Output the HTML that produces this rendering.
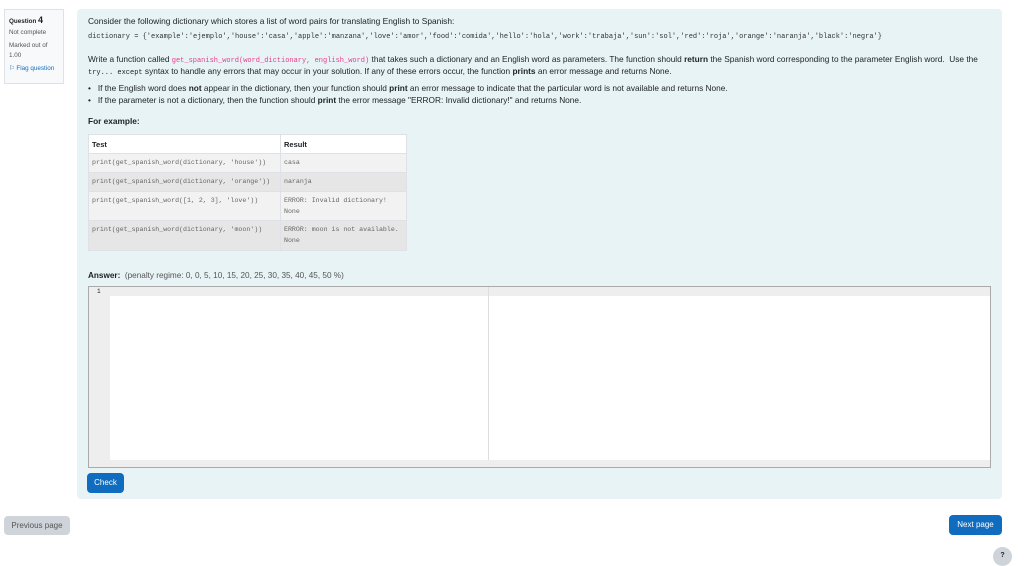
<!DOCTYPE html>
<html><head><meta charset="utf-8"><style>
*{box-sizing:border-box;margin:0;padding:0}
body{width:1024px;height:561px;background:#fff;font-family:"Liberation Sans",sans-serif;color:#1d2125;position:relative;overflow:hidden;font-size:7px}
.info{position:absolute;left:4px;top:9px;width:60px;height:75px;background:#f8f9fa;border:1px solid #dee2e6;padding:5px 4px;font-size:6.3px;color:#555}
.info b{color:#1d2125;font-size:6.3px}
.panel{position:absolute;left:77px;top:9px;width:925px;height:490px;background:#e7f3f5;border-radius:4px}
.t{position:absolute;white-space:nowrap}
.mono{font-family:"Liberation Mono",monospace;font-size:7px}
table{position:absolute;left:88px;top:134px;border-collapse:collapse;font-size:7.5px;table-layout:fixed;width:318px}
td,th{border:1px solid #dee2e6;padding:0 3px;text-align:left;vertical-align:top;overflow:hidden}
th{background:#fff;height:19px;vertical-align:middle;font-size:7.5px}
td{font-family:"Liberation Mono",monospace;color:#666;font-size:6.6px;line-height:11px;padding-top:3px;white-space:nowrap}
.btn{position:absolute;border-radius:4px;color:#fff;background:#0f6cbf;font-size:8px;text-align:center}
</style></head><body>
<div class="info"><b>Question <span style="font-size:9px">4</span></b><div style="margin-top:4px">Not complete</div><div style="margin-top:5px;line-height:10px">Marked out of<br>1.00</div><div style="margin-top:4px;color:#0f6cbf">⚐ Flag question</div></div>
<div class="panel"></div>
<div class="t" style="left:88px;top:16px;font-size:8.4px">Consider the following dictionary which stores a list of word pairs for translating English to Spanish:</div>
<div class="t mono" style="left:88px;top:33px;color:#333;font-size:7px">dictionary = {'example':'ejemplo','house':'casa','apple':'manzana','love':'amor','food':'comida','hello':'hola','work':'trabaja','sun':'sol','red':'roja','orange':'naranja','black':'negra'}</div>
<div class="t" style="left:88px;top:54px;font-size:8.3px">Write a function called <span class="mono" style="color:#e83e8c">get_spanish_word(word_dictionary, english_word)</span> that takes such a dictionary and an English word as parameters. The function should <b>return</b> the Spanish word corresponding to the parameter English word.&nbsp; Use the</div>
<div class="t" style="left:88px;top:66px;font-size:8.3px"><span class="mono">try... except</span> syntax to handle any errors that may occur in your solution. If any of these errors occur, the function <b>prints</b> an error message and returns None.</div>
<div class="t" style="left:88px;top:83px;font-size:8.3px">•&nbsp;&nbsp; If the English word does <b>not</b> appear in the dictionary, then your function should <b>print</b> an error message to indicate that the particular word is not available and returns None.</div>
<div class="t" style="left:88px;top:95px;font-size:8.3px">•&nbsp;&nbsp; If the parameter is not a dictionary, then the function should <b>print</b> the error message "ERROR: Invalid dictionary!" and returns None.</div>
<div class="t" style="left:88px;top:116px;font-size:8.3px;font-weight:bold">For example:</div>
<table>
<colgroup><col style="width:192px"><col style="width:126px"></colgroup>
<tr><th>Test</th><th>Result</th></tr>
<tr style="background:#f2f2f2"><td style="height:19px">print(get_spanish_word(dictionary, 'house'))</td><td>casa</td></tr>
<tr style="background:#e6e6e6"><td style="height:19px">print(get_spanish_word(dictionary, 'orange'))</td><td>naranja</td></tr>
<tr style="background:#f2f2f2"><td style="height:29px">print(get_spanish_word([1, 2, 3], 'love'))</td><td>ERROR: Invalid dictionary!<br>None</td></tr>
<tr style="background:#e6e6e6"><td style="height:30px">print(get_spanish_word(dictionary, 'moon'))</td><td>ERROR: moon is not available.<br>None</td></tr>
</table>
<div class="t" style="left:88px;top:271px;font-size:8.2px"><b>Answer:</b>&nbsp; <span style="color:#555">(penalty regime: 0, 0, 5, 10, 15, 20, 25, 30, 35, 40, 45, 50 %)</span></div>
<div style="position:absolute;left:88px;top:286px;width:903px;height:182px;background:#fff;border:1px solid #aaa"></div>
<div style="position:absolute;left:89px;top:287px;width:901px;height:9px;background:#eee"></div>
<div style="position:absolute;left:89px;top:287px;width:21px;height:180px;background:#eee"></div>
<div style="position:absolute;left:89px;top:460px;width:901px;height:7px;background:#eee"></div>
<div style="position:absolute;left:488px;top:287px;width:1px;height:173px;background:#ddd"></div>
<div class="t mono" style="left:97px;top:288px;font-size:6px">1</div>
<div class="btn" style="left:87px;top:473px;width:37px;height:20px;line-height:20px">Check</div>
<div class="btn" style="left:4px;top:516px;width:66px;height:19px;line-height:19px;background:#ced4da;color:#555">Previous page</div>
<div class="btn" style="left:949px;top:515px;width:53px;height:20px;line-height:20px">Next page</div>
<div style="position:absolute;left:993px;top:547px;width:19px;height:19px;border-radius:50%;background:#ced4da;text-align:center;font-size:7px;font-weight:bold;line-height:17px">?</div>
</body></html>
